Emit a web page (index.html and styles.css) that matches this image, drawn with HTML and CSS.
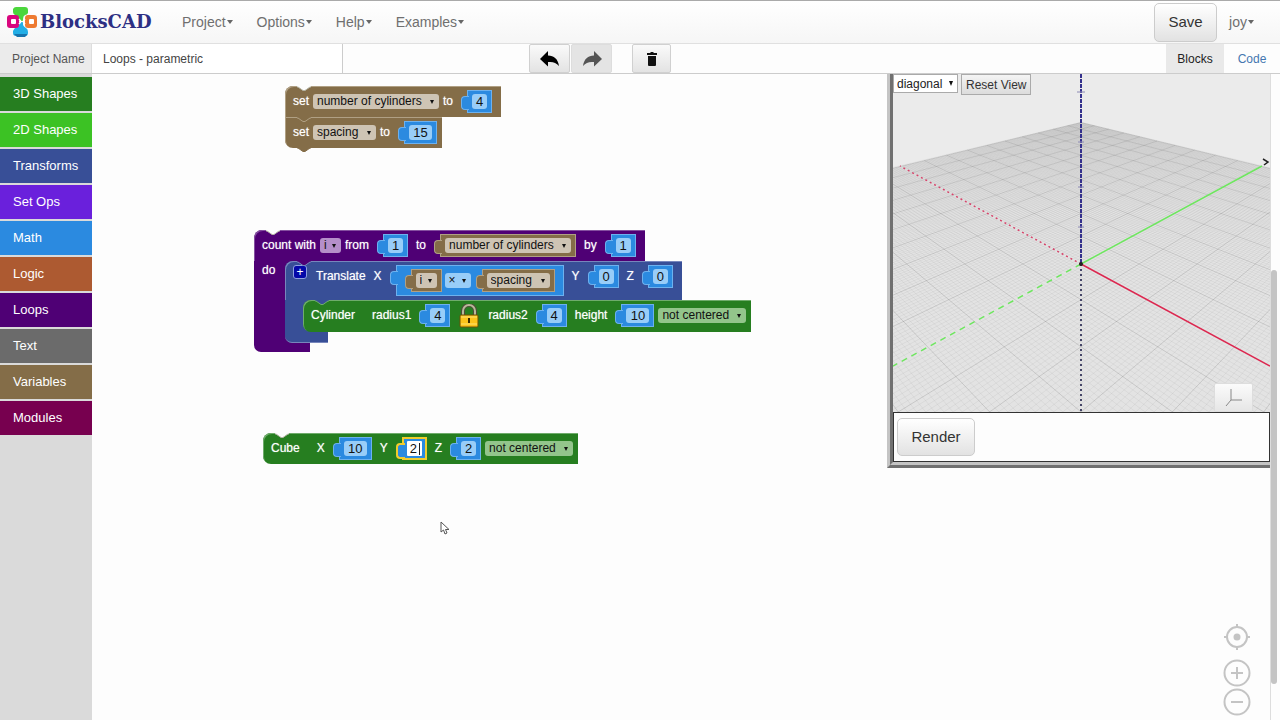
FILE: index.html
```html
<!DOCTYPE html>
<html lang="en">
<head>
<meta charset="utf-8">
<title>BlocksCAD</title>
<link rel="stylesheet" href="styles.css">
</head>
<body>
<svg class="defs" aria-hidden="true">
  <symbol id="notch" viewBox="0 0 14 5"><path class="notch-fill" d="M0 0V1H1L6 4.500H8L13 1H14V0Z"/><path class="notch-line" d="M0 1H1L6 4.500H8L13 1H14"/></symbol>
  <symbol id="arrow" viewBox="0 0 20 16"><path d="M0 8L8 0V4.500C14 4.500 18 8 19 15C16 11.500 13 10.500 8 11V15.500Z"/></symbol>
</svg>

<header class="navbar">
  <a class="brand" href="#" aria-label="BlocksCAD home">
    <svg class="logo" viewBox="0 0 32 30" aria-hidden="true">
      <path fill="#4bd63c" d="M10 0H19Q22 0 22 3V6Q21 8 19 8Q17 9 17 12V14H13V12Q12 9 9 8Q7 7 7 5V2Q8 0 10 0Z"/>
      <path fill="#22aee6" d="M13 15H17V18Q18 20 20 21Q22 22 22 25V26Q22 29 19 29H10Q7 29 7 26V24Q8 21 11 20Q13 19 13 17Z"/>
      <path fill="#1774ad" d="M8 27H21V28L19 30H11Z"/>
      <rect x="1" y="8" width="12" height="13" rx="3" fill="#d9067e"/>
      <rect x="19" y="8" width="12" height="13" rx="3" fill="#ee7a31"/>
      <path d="M13 12L15 14.500L13 17M19 12L17 14.500L19 17" fill="none" stroke="#fff" stroke-width="1.500"/>
      <rect x="5" y="12" width="5" height="5" rx="1" fill="#fff"/>
      <rect x="23" y="12" width="5" height="5" rx="1" fill="#fff"/>
    </svg>
    <span class="brand-name">BlocksCAD</span>
  </a>
  <nav class="menus">
    <button class="menu">Project</button>
    <button class="menu">Options</button>
    <button class="menu">Help</button>
    <button class="menu">Examples</button>
  </nav>
  <button class="btn btn-save">Save</button>
  <button class="menu user">joy</button>
</header>

<div class="toolbar">
  <label class="name-label" for="project-name">Project Name</label>
  <input class="name-input" id="project-name" value="Loops - parametric">
  <div class="tools">
    <button class="tool" aria-label="Undo"><svg class="tool-icon" aria-hidden="true"><use href="#arrow"/></svg></button>
    <button class="tool tool-off" aria-label="Redo"><svg class="tool-icon flip" aria-hidden="true"><use href="#arrow"/></svg></button>
    <button class="tool tool-trash" aria-label="Delete"><svg class="trash-icon" viewBox="0 0 12 14" aria-hidden="true"><path d="M1 1H4L5 0H7L8 1H11V3H1ZM2 4H10V13Q10 14 9 14H3Q2 14 2 13Z"/></svg></button>
  </div>
  <div class="tabs">
    <button class="tab tab-on">Blocks</button>
    <button class="tab">Code</button>
  </div>
</div>

<main class="main">
  <aside class="toolbox">
    <button class="cat shapes3d">3D Shapes</button>
    <button class="cat shapes2d">2D Shapes</button>
    <button class="cat transforms">Transforms</button>
    <button class="cat setops">Set Ops</button>
    <button class="cat math">Math</button>
    <button class="cat logic">Logic</button>
    <button class="cat loops">Loops</button>
    <button class="cat text">Text</button>
    <button class="cat variables">Variables</button>
    <button class="cat modules">Modules</button>
  </aside>

  <section class="workspace" aria-label="Workspace">
    <div class="stack stack-set">
      <div class="row variables first">
        <svg class="notch" aria-hidden="true"><use href="#notch"/></svg>
        <span class="label">set</span>
        <span class="drop"><select aria-label="Variable"><option>number of cylinders</option></select></span>
        <span class="label">to</span>
        <span class="value math"><input class="num" aria-label="Value" value="4"></span>
      </div>
      <div class="row variables last">
        <svg class="notch inner-brown" aria-hidden="true"><use href="#notch"/></svg>
        <span class="label">set</span>
        <span class="drop"><select aria-label="Variable"><option>spacing</option></select></span>
        <span class="label">to</span>
        <span class="value math"><input class="num wide" aria-label="Value" value="15"></span>
        <svg class="notch bump" aria-hidden="true"><use href="#notch"/></svg>
      </div>
    </div>

    <div class="stack stack-loop">
      <div class="row loops first">
        <svg class="notch" aria-hidden="true"><use href="#notch"/></svg>
        <span class="label">count with</span>
        <span class="drop tight lilac"><select aria-label="Loop variable"><option>i</option></select></span>
        <span class="label">from</span>
        <span class="value math"><input class="num" aria-label="From" value="1"></span>
        <span class="label">to</span>
        <span class="value variables"><span class="drop"><select aria-label="To"><option>number of cylinders</option></select></span></span>
        <span class="label">by</span>
        <span class="value math"><input class="num" aria-label="By" value="1"></span>
      </div>
      <div class="body">
        <div class="arm arm-wide loops"><span class="label">do</span></div>
        <div class="stack nest nest-loops">
          <div class="row transforms first">
            <svg class="notch inner-purple" aria-hidden="true"><use href="#notch"/></svg>
            <button class="plus" aria-label="Add">+</button>
            <span class="label">Translate</span>
            <span class="label gap-s">X</span>
            <span class="value math compound">
              <span class="value variables"><span class="drop tight"><select aria-label="Left operand"><option>i</option></select></span></span>
              <span class="drop tight sky"><select aria-label="Operator"><option>×</option></select></span>
              <span class="value variables"><span class="drop"><select aria-label="Right operand"><option>spacing</option></select></span></span>
            </span>
            <span class="label">Y</span>
            <span class="value math"><input class="num" aria-label="Y" value="0"></span>
            <span class="label">Z</span>
            <span class="value math"><input class="num" aria-label="Z" value="0"></span>
          </div>
          <div class="body">
            <div class="arm transforms"></div>
            <div class="stack nest nest-transforms">
              <div class="row shapes3d first last">
                <svg class="notch inner-blue" aria-hidden="true"><use href="#notch"/></svg>
                <span class="label">Cylinder</span>
                <span class="label gap-l">radius1</span>
                <span class="value math"><input class="num" aria-label="Radius 1" value="4"></span>
                <svg class="lock" viewBox="0 0 20 24" aria-hidden="true">
                  <path d="M4 12V7A6 6 0 0 1 16 7V12" fill="none" stroke="#4e4c38" stroke-width="4"/>
                  <path d="M4 12V7A6 6 0 0 1 16 7V12" fill="none" stroke="#b9b99a" stroke-width="2"/>
                  <rect x="1" y="11" width="18" height="12" rx="1" fill="#fbc31a" stroke="#6b5006"/>
                  <path d="M2 13H18M2 20H18" stroke="#ffe474"/>
                  <path d="M10 14V19" stroke="#3c2c00" stroke-width="2"/>
                </svg>
                <span class="label">radius2</span>
                <span class="value math"><input class="num" aria-label="Radius 2" value="4"></span>
                <span class="label">height</span>
                <span class="value math"><input class="num wide" aria-label="Height" value="10"></span>
                <span class="drop mint"><select aria-label="Centering"><option>not centered</option></select></span>
              </div>
            </div>
          </div>
          <div class="foot foot-inner transforms"></div>
        </div>
      </div>
      <div class="foot loops"></div>
    </div>

    <div class="stack stack-cube">
      <div class="row shapes3d first last">
        <svg class="notch" aria-hidden="true"><use href="#notch"/></svg>
        <span class="label">Cube</span>
        <span class="label gap-l">X</span>
        <span class="value math"><input class="num wide" aria-label="X" value="10"></span>
        <span class="label">Y</span>
        <span class="value math selected"><input class="num editing" aria-label="Y" value="2"></span>
        <span class="label">Z</span>
        <span class="value math"><input class="num" aria-label="Z" value="2"></span>
        <span class="drop mint"><select aria-label="Centering"><option>not centered</option></select></span>
      </div>
    </div>

    <svg class="pointer" viewBox="0 0 10 14" aria-hidden="true"><path d="M1 1V11L3.500 9L5 13L7 12L5.500 8.500H9Z" fill="#fff" stroke="#555"/></svg>

    <section class="viewer" aria-label="3D view">
      <div class="scene">
        <svg class="grid" viewBox="0 0 377 338" preserveAspectRatio="xMidYMid slice" aria-hidden="true">
          <path class="ground" d="M188 48L-200 141V338H577V141Z"/>
          <path class="minor" id="minor"/>
          <path class="major" id="major"/>
          <path class="z-up" d="M188 0V190"/>
          <path class="z-down" d="M188 190V338"/>
          <path class="z-ticks" d="M184 18H192M185 68H191M185 113H191M185 153H191"/>
          <path class="x-neg" d="M188 190L7 92"/>
          <path class="x-pos" d="M188 190L377 292"/>
          <path class="y-neg" d="M188 190L0 292"/>
          <path class="y-pos" d="M188 190L369 92"/>
          <circle cx="188" cy="190" r="2" fill="#222"/>
          <path class="tip" d="M370 85L375 88L371 91"/>
        </svg>
        <div class="view-tools">
          <span class="view-drop"><select aria-label="View"><option>diagonal</option></select></span>
          <button class="reset">Reset View</button>
        </div>
        <button class="axes" aria-label="Toggle axes"><svg class="axes-icon" viewBox="0 0 18 18" aria-hidden="true"><path d="M6 0V11H17M6 11L1 17"/></svg></button>
      </div>
      <div class="render-bar"><button class="btn btn-render">Render</button></div>
    </section>

    <div class="scrollbar"><div class="thumb"></div></div>

    <div class="zoom">
      <button class="zoom-btn" aria-label="Center"><svg class="target" viewBox="0 0 28 28" aria-hidden="true"><circle cx="14" cy="14" r="10"/><circle class="dot" cx="14" cy="14" r="3.500"/><path d="M14 1V5M14 23V27M1 14H5M23 14H27"/></svg></button>
      <button class="zoom-btn" aria-label="Zoom in"><svg class="target" viewBox="0 0 28 28" aria-hidden="true"><circle cx="14" cy="14" r="12.500"/><path d="M14 8V20M8 14H20"/></svg></button>
      <button class="zoom-btn" aria-label="Zoom out"><svg class="target" viewBox="0 0 28 28" aria-hidden="true"><circle cx="14" cy="14" r="12.500"/><path d="M8 14H20"/></svg></button>
    </div>
  </section>
</main>
<script src="grid.js"></script>
</body>
</html>
```

FILE: styles.css
```css
* { box-sizing: border-box; }
body {
  margin: 0;
  min-height: 100vh;
  display: flex;
  flex-direction: column;
  font: 12px/16px "Liberation Sans", Arial, sans-serif;
  color: #333;
  background: #fdfdfd;
}
button, input, select { font: inherit; color: inherit; margin: 0; padding: 0; border: 0; background: none; border-radius: 0; }
.defs { position: absolute; width: 0; height: 0; }

/* Navigation */
.navbar {
  display: flex;
  align-items: center;
  height: 44px;
  padding: 0 26px 0 6px;
  border-top: 1px solid #aaa;
  border-bottom: 1px solid #e0e0e0;
  background: linear-gradient(#fff, #f6f6f6);
}
.brand { display: flex; align-items: center; gap: 2px; width: 176px; text-decoration: none; }
.logo { width: 32px; height: 30px; }
.brand-name { font: bold 18px/24px "DejaVu Serif", serif; color: #2d2f83; }
.menus { display: flex; gap: 24px; flex: 1; }
.menu { display: flex; align-items: center; gap: 1px; font-size: 14px; line-height: 20px; color: #6f6f6f; }
.menu::after { content: ""; border: 3px solid transparent; border-top: 4px solid #666; border-bottom: 0; }
.btn { border: 1px solid #ccc; border-radius: 5px; background: linear-gradient(#fff, #e2e2e2); font-size: 15px; line-height: 20px; }
.btn-save { width: 63px; height: 39px; margin-right: 12px; }

/* Project toolbar */
.toolbar { display: flex; height: 30px; border-bottom: 1px solid #ccc; }
.name-label { width: 92px; padding: 7px 0 0 12px; background: #ebebeb; border-right: 1px solid #ddd; color: #555; }
.name-input { width: 251px; padding: 0 11px; border-right: 1px solid #ccc; color: #444; background: #fff; }
.tools { display: flex; flex: 1; gap: 1px; margin-left: 186px; }
.tool { display: flex; align-items: center; justify-content: center; width: 41px; border: 1px solid #d0d0d0; border-radius: 2px; background: linear-gradient(#fafafa, #e3e3e3); }
.tool-off { background: #e4e4e4; color: #555; border-color: #ddd; }
.tool-trash { width: 39px; margin-left: 19px; }
.tool-icon { width: 20px; height: 16px; fill: #000; }
.flip { transform: scaleX(-1); fill: #555; }
.trash-icon { width: 12px; height: 14px; fill: #111; }
.tabs { display: flex; }
.tab { width: 56px; color: #4477b0; }
.tab-on { width: 58px; background: #e9e9e9; color: #222; }

/* Block colours, shared by toolbox and blocks */
.shapes3d { background: #267e20; --edge: #6fac6b; }
.shapes2d { background: #3cc224; }
.transforms { background: #384f97; --edge: #7786bc; }
.setops { background: #6a20dc; }
.math { background: #2b8ae0; --edge: #6db1ee; }
.logic { background: #ad5a31; }
.loops { background: #4f0075; --edge: #8550a0; }
.text { background: #6b6b6b; }
.variables { background: #846d48; --edge: #b0a084; }
.modules { background: #77004f; }

.main { display: flex; flex: 1; }
.toolbox { display: flex; flex-direction: column; gap: 2px; width: 92px; padding-top: 3px; background: #dadada; }
.cat { height: 34px; padding-left: 13px; text-align: left; font-size: 13px; color: #fff; }

/* Workspace */
.workspace { position: relative; flex: 1; overflow: hidden; }
.stack { display: flex; flex-direction: column; align-items: flex-start; }
.stack-set { position: absolute; left: 193px; top: 12px; }
.stack-loop { position: absolute; left: 162px; top: 156px; }
.stack-cube { position: absolute; left: 171px; top: 359px; }
.row {
  position: relative;
  display: flex;
  align-items: flex-start;
  gap: 4px;
  min-height: 31px;
  padding: 4px 5px 4px 8px;
  box-shadow: inset 1px 1px var(--edge);
}
.first { border-top-left-radius: 8px; }
.last { border-bottom-left-radius: 8px; }
.label { padding-top: 3px; color: #fff; text-shadow: 0 0 1px rgba(255, 255, 255, .6); }
.value + .label { margin-left: 4px; }
.gap-s { margin-left: 4px; }
.gap-l { margin-left: 13px; }
.notch { position: absolute; left: 12px; top: 0; width: 14px; height: 5px; --above: #fdfdfd; }
.notch-fill { fill: var(--above); }
.notch-line { fill: none; stroke: var(--line, #b5b5a5); }
.inner-brown { --above: #846d48; --line: #b0a084; }
.inner-purple { --above: #4f0075; --line: #7786bc; }
.inner-blue { --above: #384f97; --line: #6fac6b; }
.bump { top: auto; bottom: -4px; --above: #846d48; --line: #846d48; }

.value { position: relative; display: flex; align-items: flex-start; height: 23px; margin-left: 10px; padding: 3px 4px; border: 1px solid var(--edge); }
.value::before { content: ""; position: absolute; left: -7px; top: 5px; width: 7px; height: 12px; border: 1px solid var(--edge); border-right: 0; border-radius: 4px 0 0 4px; background: inherit; }
.value:last-child { margin-right: 4px; }
.compound { height: 31px; gap: 3px; padding: 3px 4px; }
.compound .value:last-child { margin-left: 8px; }
.num { width: 15px; height: 15px; border-radius: 3px; background: #98cdf8; color: #111; text-align: center; font-size: 13px; }
.wide { width: 23px; }
.selected { border: 2px solid #f2cc2c; padding: 2px 3px; }
.selected::before { left: -8px; top: 4px; border: 2px solid #f2cc2c; border-right: 0; }
.editing { border-radius: 1px; background: linear-gradient(#222, #222) 12px 2px / 1px 12px no-repeat #fff; text-align: left; padding-left: 3px; }

.drop { position: relative; display: flex; height: 15px; margin-top: 4px; border-radius: 3px; background: #cec4b4; color: #111; }
.value .drop { margin-top: 0; }
.compound .sky { margin-top: 4px; }
.drop select { appearance: none; height: 15px; padding: 0 17px 0 4px; line-height: 15px; }
.tight select { padding-right: 14px; }
.drop::after, .view-drop::after { content: ""; position: absolute; right: 5px; top: 6px; border: 2px solid transparent; border-top: 4px solid #111; border-bottom: 0; pointer-events: none; }
.lilac { background: #b58fc9; }
.sky { background: #98cdf8; }
.mint { background: #93c58b; }

.body { display: flex; }
.arm { width: 18px; }
.arm-wide { width: 31px; padding: 1px 0 0 8px; }
.nest-loops { background: linear-gradient(90deg, #4f0075 8px, transparent 8px); }
.nest-transforms { background: linear-gradient(90deg, #384f97 8px, transparent 8px); }
.foot { width: 56px; height: 9px; border-bottom-left-radius: 7px; }
.foot-inner { width: 43px; height: 11px; border-bottom: 1px solid #7786bc; }
.nest-loops > .row { min-height: 39px; }
.plus { width: 14px; height: 14px; margin: 0 5px 0 0; border: 1px solid #8fa0e0; border-radius: 3px; background: #0408a8; color: #fff; line-height: 10px; }
.lock { width: 20px; height: 24px; margin: 0 5px; }
.pointer { position: absolute; left: 348px; top: 447px; width: 10px; height: 14px; }

/* 3D viewer */
.viewer { position: absolute; top: 0; right: 10px; width: 383px; border: 6px ridge #c4c4c4; border-top: 0; border-right: 0; }
.scene { position: relative; height: 338px; background: #ebebeb; overflow: hidden; }
.grid { display: block; width: 100%; height: 100%; }
.grid path { stroke-width: 1; fill: none; }
.grid .ground { fill: #e3e3e3; }
.grid .minor { stroke: #000; stroke-opacity: .045; }
.grid .major { stroke: #000; stroke-opacity: .12; }
.grid .z-up { stroke: #34308c; stroke-width: 2; stroke-dasharray: 4 1; }
.grid .z-down { stroke: #444466; stroke-dasharray: 2 3; stroke-width: 2; }
.grid .z-ticks { stroke: #8c8ab4; }
.grid .x-neg { stroke: #d6456b; stroke-width: 1.5; stroke-dasharray: 2 3; }
.grid .x-pos { stroke: #dc2850; stroke-width: 1.5; }
.grid .y-neg { stroke: #6ee65f; stroke-width: 1.5; stroke-dasharray: 6 5; }
.grid .y-pos { stroke: #6ee65f; stroke-width: 1.5; }
.grid .tip { stroke: #222; stroke-width: 1.5; }
.view-tools { position: absolute; left: 0; top: 0; display: flex; align-items: flex-start; gap: 3px; }
.view-drop { position: relative; display: flex; height: 19px; border: 1px solid #aaa; background: #fff; }
.view-drop select { appearance: none; padding: 0 14px 0 3px; color: #222; }
.view-drop::after { top: 6px; right: 4px; border-width: 2px; border-top-width: 5px; }
.reset { height: 21px; padding: 0 4px; border: 1px solid #aaa; background: linear-gradient(#f4f4f4, #dcdcdc); line-height: 18px; }
.axes { position: absolute; right: 17px; bottom: 0; width: 39px; height: 29px; border: 1px solid #ddd; border-radius: 2px; background: linear-gradient(#fbfbfb, #e6e6e6); }
.axes-icon { width: 18px; height: 18px; margin-top: 4px; fill: none; stroke: #888; }
.render-bar { height: 50px; padding: 5px 3px; border: 1px solid #333; background: #fdfdfd; }
.btn-render { width: 78px; height: 38px; line-height: 18px; }

.scrollbar { position: absolute; top: 0; right: 0; bottom: 0; width: 10px; padding: 196px 3px 36px 0; border-left: 1px solid #ddd; }
.thumb { height: 100%; border-radius: 4px; background: #c4c4c4; }
.zoom { position: absolute; right: 29px; bottom: 4px; display: flex; flex-direction: column; gap: 1px; }
.zoom-btn { width: 28px; height: 28px; }
.zoom-btn:first-child { margin-bottom: 7px; }
.target { display: block; width: 28px; height: 28px; fill: none; stroke: #c4c4c4; stroke-width: 2; }
.target .dot { fill: #c4c4c4; stroke: none; }
```

FILE: grid.js
```js
// Perspective projection of the ground plane, ten units in each direction.
const HORIZON = -68, DEPTH = 8.23, RISE = 2123, SPREAD = 239, SIZE = 10;

function project(u, v) {
  const depth = DEPTH - (u + v) / 2;
  return (188 + SPREAD * (u - v) / depth).toFixed(1) + " " + (HORIZON + RISE / depth).toFixed(1);
}

function lines(step, skip) {
  let d = "";
  for (let i = 0; i <= 2 * SIZE / step; i++) {
    // Every tenth minor line is covered by a major one; the axes have their own strokes.
    if (skip ? i % skip === 0 : i === SIZE) continue;
    const u = -SIZE + i * step;
    const end = Math.min(SIZE, 2 * (DEPTH - 1) - u);
    d += "M" + project(u, -SIZE) + "L" + project(u, end);
    d += "M" + project(-SIZE, u) + "L" + project(end, u);
  }
  return d;
}

document.getElementById("minor").setAttribute("d", lines(0.1, 10));
document.getElementById("major").setAttribute("d", lines(1, 0));
```
